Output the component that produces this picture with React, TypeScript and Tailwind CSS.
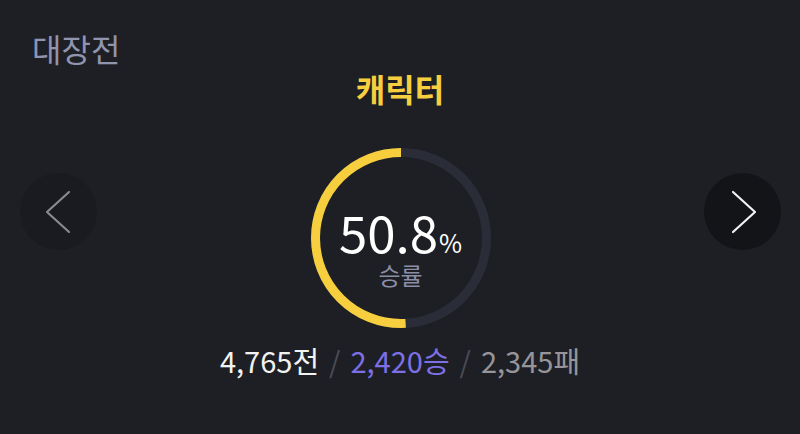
const FONT = { fontFamily: '"Noto Sans CJK KR", "Noto Sans", sans-serif' };

function Ring({ percent }: { percent: number }) {
  const r = 85.5;
  const c = 2 * Math.PI * r;
  const filled = (percent / 100) * c;
  return (
    <svg width="180" height="180" viewBox="0 0 180 180" className="absolute inset-0">
      <circle cx="90" cy="90" r={r} fill="none" stroke="#2a2d38" strokeWidth="9" />
      <circle
        cx="90"
        cy="90"
        r={r}
        fill="none"
        stroke="#f7cf3e"
        strokeWidth="9"
        strokeDasharray={`${filled} ${c}`}
        transform="rotate(-90 90 90) scale(1 -1) translate(0 -180)"
      />
    </svg>
  );
}

export default function App() {
  return (
    <div className="w-[800px] h-[434px] bg-[#1e1f25] overflow-hidden flex flex-col" style={FONT}>
      <div className="pl-[32px] pt-[28px] text-[32px] leading-[40px] text-[#9094ae]">대장전</div>

      <div className="text-center text-[32px] leading-[40px] font-bold text-[#f7cf3e]">캐릭터</div>

      <div className="flex items-start justify-between pl-[20px] pr-[19px] mt-[40px]">
        <button className="w-[77px] h-[77px] mt-[25px] rounded-full bg-[#1a1b20] flex items-center justify-center">
          <svg width="30" height="44" viewBox="0 0 30 44" fill="none" stroke="#8a8a8e" strokeWidth="2.2" strokeLinecap="round" strokeLinejoin="round">
            <path d="M25 2 L3 22 L25 42" />
          </svg>
        </button>

        <div className="relative w-[180px] h-[180px] flex flex-col items-center justify-center">
          <Ring percent={50.8} />
          <div className="flex items-baseline text-white mt-[20px]">
            <span className="text-[51px] leading-[48px]">50.8</span>
            <span className="text-[25px] leading-[30px] ml-[1px]">%</span>
          </div>
          <div className="text-[24px] leading-[28px] text-[#8b8fa6] mt-[4px]">승률</div>
        </div>

        <button className="w-[77px] h-[77px] mt-[25px] rounded-full bg-[#131418] flex items-center justify-center">
          <svg width="30" height="44" viewBox="0 0 30 44" fill="none" stroke="#f2f2f2" strokeWidth="2.2" strokeLinecap="round" strokeLinejoin="round">
            <path d="M5 2 L27 22 L5 42" />
          </svg>
        </button>
      </div>

      <div className="flex justify-center items-baseline mt-[12px] text-[29px] leading-[40px]">
        <span className="text-[#f2f2f2]">4,765전</span>
        <span className="text-[#4a4c55] mx-[10px]">/</span>
        <span className="text-[#7d70e6]">2,420승</span>
        <span className="text-[#4a4c55] mx-[10px]">/</span>
        <span className="text-[#96969a]">2,345패</span>
      </div>
    </div>
  );
}
